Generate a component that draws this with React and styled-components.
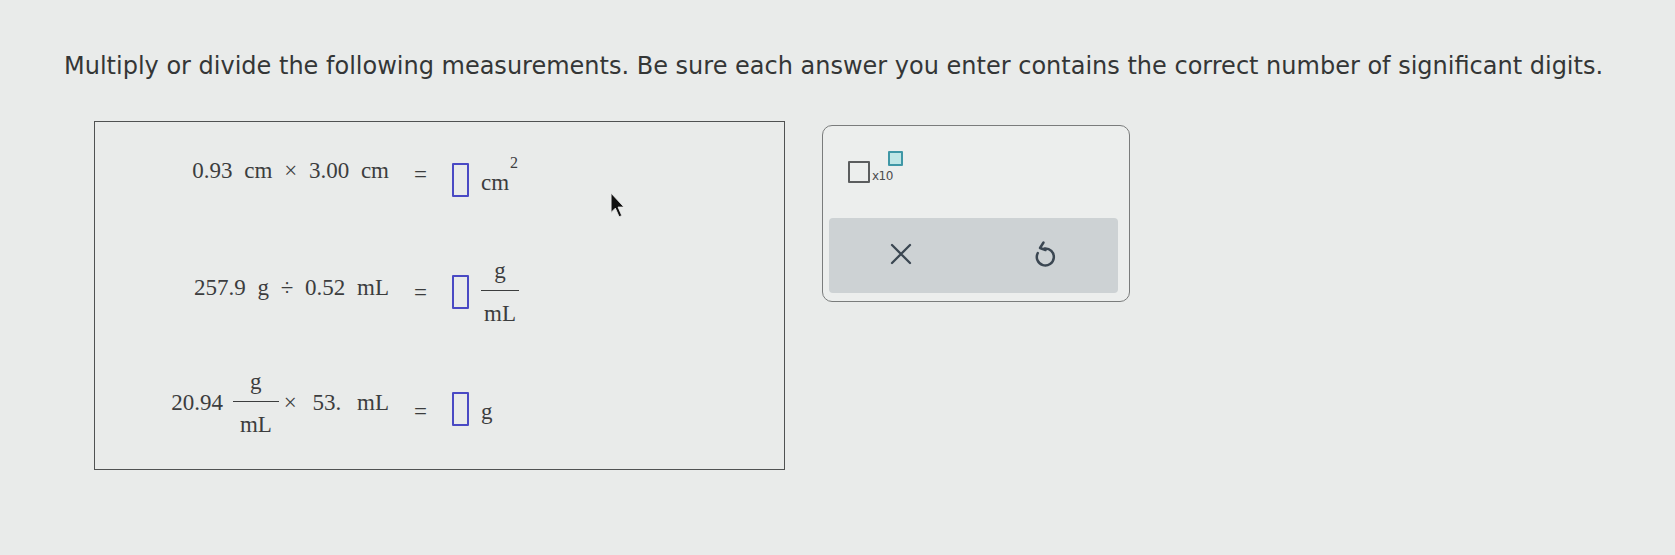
import React from 'react';
import styled, { createGlobalStyle } from 'styled-components';

const GlobalStyle = createGlobalStyle`
  html, body {
    margin: 0;
    padding: 0;
    background: #e9ebea;
  }
  body {
    width: 1675px;
    height: 555px;
    overflow: hidden;
  }
`;

const Page = styled.div`
  position: relative;
  padding: 52px 0 0 64px;
`;

const Title = styled.div`
  font-family: "DejaVu Sans", Verdana, sans-serif;
  font-size: 24px;
  line-height: 28px;
  color: #343636;
  white-space: nowrap;
`;

const Workspace = styled.div`
  display: flex;
  align-items: flex-start;
  gap: 37px;
  margin-top: 41px;
  padding-left: 30px;
`;

const ProblemBox = styled.div`
  box-sizing: border-box;
  width: 691px;
  height: 349px;
  border: 1.5px solid #505252;
  padding: 23px 0 0 60px;
`;

const EquationGrid = styled.div`
  display: grid;
  grid-template-columns: 234px 63px auto;
  grid-auto-rows: 70px;
  row-gap: 42px;
  align-items: center;
  font-family: "Liberation Serif", "Times New Roman", serif;
  font-size: 23px;
  color: #3c3d3e;
`;

const Expression = styled.div`
  display: flex;
  align-items: center;
  justify-content: flex-end;
  white-space: pre;
  word-spacing: ${(p) => p.$spacing || 6}px;
  padding-bottom: ${(p) => p.$lift ?? 6}px;
`;

const Equals = styled.div`
  text-align: center;
  padding: ${(p) => p.$pad || '0 0 4px'};
`;

const Answer = styled.div`
  display: flex;
  align-items: center;
  gap: 12px;
  padding-top: ${(p) => p.$drop || 0}px;
`;

const InputBox = styled.div`
  box-sizing: border-box;
  width: 17px;
  height: 34px;
  border: 2px solid #4a4ac4;
  border-radius: 1px;
`;

const Unit = styled.span`
  display: flex;
  align-self: flex-end;
  line-height: 22px;
  margin-bottom: 3px;
`;

const Power = styled.span`
  font-size: 16px;
  line-height: 16px;
  margin-top: -17px;
  margin-left: 1px;
`;

const Fraction = styled.span`
  display: inline-flex;
  flex-direction: column;
  align-items: center;
  line-height: 22px;
  word-spacing: 0;
  margin: ${(p) => p.$margin || '0'};
`;

const Numer = styled.span`
  padding: 0 0 8px;
`;

const Denom = styled.span`
  padding: 12px ${(p) => p.$pad || 3}px 0;
  border-top: 1.5px solid #3c3d3e;
  align-self: stretch;
  text-align: center;
`;

const Panel = styled.div`
  box-sizing: border-box;
  width: 308px;
  height: 177px;
  margin-top: 4px;
  border: 1.5px solid #7a7c7c;
  border-radius: 10px;
  background: #eceeed;
  padding: 0 11px 8px 6px;
  display: flex;
  flex-direction: column;
`;

const PanelTop = styled.div`
  flex: 1;
  padding: 35px 0 0 19px;
`;

const SciNotation = styled.div`
  display: inline-flex;
  align-items: flex-end;
`;

const Mantissa = styled.div`
  box-sizing: border-box;
  width: 22px;
  height: 22px;
  border: 2px solid #5b5d5e;
  border-radius: 1px;
`;

const Times10 = styled.span`
  font-family: "DejaVu Sans", Verdana, sans-serif;
  font-size: 12px;
  line-height: 12px;
  color: #4a4c4d;
  margin: 0 0 1px 2px;
  letter-spacing: -0.5px;
`;

const Exponent = styled.div`
  box-sizing: border-box;
  width: 15px;
  height: 15px;
  align-self: flex-start;
  margin: -10px 0 0 -5px;
  border: 2px solid #3f97a6;
  background: #bfe6e6;
  border-radius: 1px;
`;

const ButtonBar = styled.div`
  display: flex;
  height: 75px;
  background: #cdd2d4;
  border-radius: 4px;
`;

const ToolButton = styled.button`
  flex: 1;
  display: flex;
  align-items: center;
  justify-content: center;
  background: transparent;
  border: none;
  padding: 0 0 4px;
  cursor: pointer;
`;

const Cursor = styled.svg`
  position: absolute;
  left: 610px;
  top: 192px;
`;

const ClearIcon = () => (
  <svg width="22" height="22" viewBox="0 0 22 22">
    <path d="M2 2 L20 20 M20 2 L2 20" stroke="#3b4752" strokeWidth="2.3" strokeLinecap="round" fill="none" />
  </svg>
);

const UndoIcon = () => (
  <svg width="22" height="28" viewBox="0 0 22 28">
    <path
      d="M9.5 8.5 A8.5 8.5 0 1 1 2.8 13"
      stroke="#3b4752"
      strokeWidth="2.5"
      strokeLinecap="round"
      fill="none"
    />
    <path
      d="M8.5 2.5 L5 8 L10.5 10"
      stroke="#3b4752"
      strokeWidth="2.5"
      strokeLinecap="round"
      strokeLinejoin="round"
      fill="none"
    />
  </svg>
);

const App = () => {
  return (
    <>
      <GlobalStyle />
      <Page>
        <Title>
          Multiply or divide the following measurements. Be sure each answer you enter contains the correct number of significant digits.
        </Title>
        <Workspace>
          <ProblemBox>
            <EquationGrid>
              <Expression $lift={19}>0.93 cm × 3.00 cm</Expression>
              <Equals $pad="0 0 11px">=</Equals>
              <Answer>
                <InputBox />
                <Unit>
                  cm<Power>2</Power>
                </Unit>
              </Answer>

              <Expression $lift={8}>257.9 g ÷ 0.52 mL</Expression>
              <Equals $pad="1px 0 0">=</Equals>
              <Answer>
                <InputBox />
                <Fraction>
                  <Numer>g</Numer>
                  <Denom>mL</Denom>
                </Fraction>
              </Answer>

              <Expression $lift={2} $spacing={10}>
                20.94
                <Fraction $margin="0 5px 0 10px">
                  <Numer>g</Numer>
                  <Denom $pad={7}>mL</Denom>
                </Fraction>
                × 53. mL
              </Expression>
              <Equals $pad="15px 0 0">=</Equals>
              <Answer $drop={10}>
                <InputBox />
                <Unit>g</Unit>
              </Answer>
            </EquationGrid>
          </ProblemBox>

          <Panel>
            <PanelTop>
              <SciNotation>
                <Mantissa />
                <Times10>x10</Times10>
                <Exponent />
              </SciNotation>
            </PanelTop>
            <ButtonBar>
              <ToolButton aria-label="Clear">
                <ClearIcon />
              </ToolButton>
              <ToolButton aria-label="Undo">
                <UndoIcon />
              </ToolButton>
            </ButtonBar>
          </Panel>
        </Workspace>
        <Cursor width="15" height="28" viewBox="0 0 14 26">
          <path d="M1 1 L1 19 L5 15 L8.5 23 L11 22 L7.5 14 L13 14 Z" fill="#111" stroke="#eee" strokeWidth="0.8" />
        </Cursor>
      </Page>
    </>
  );
};

export default App;
